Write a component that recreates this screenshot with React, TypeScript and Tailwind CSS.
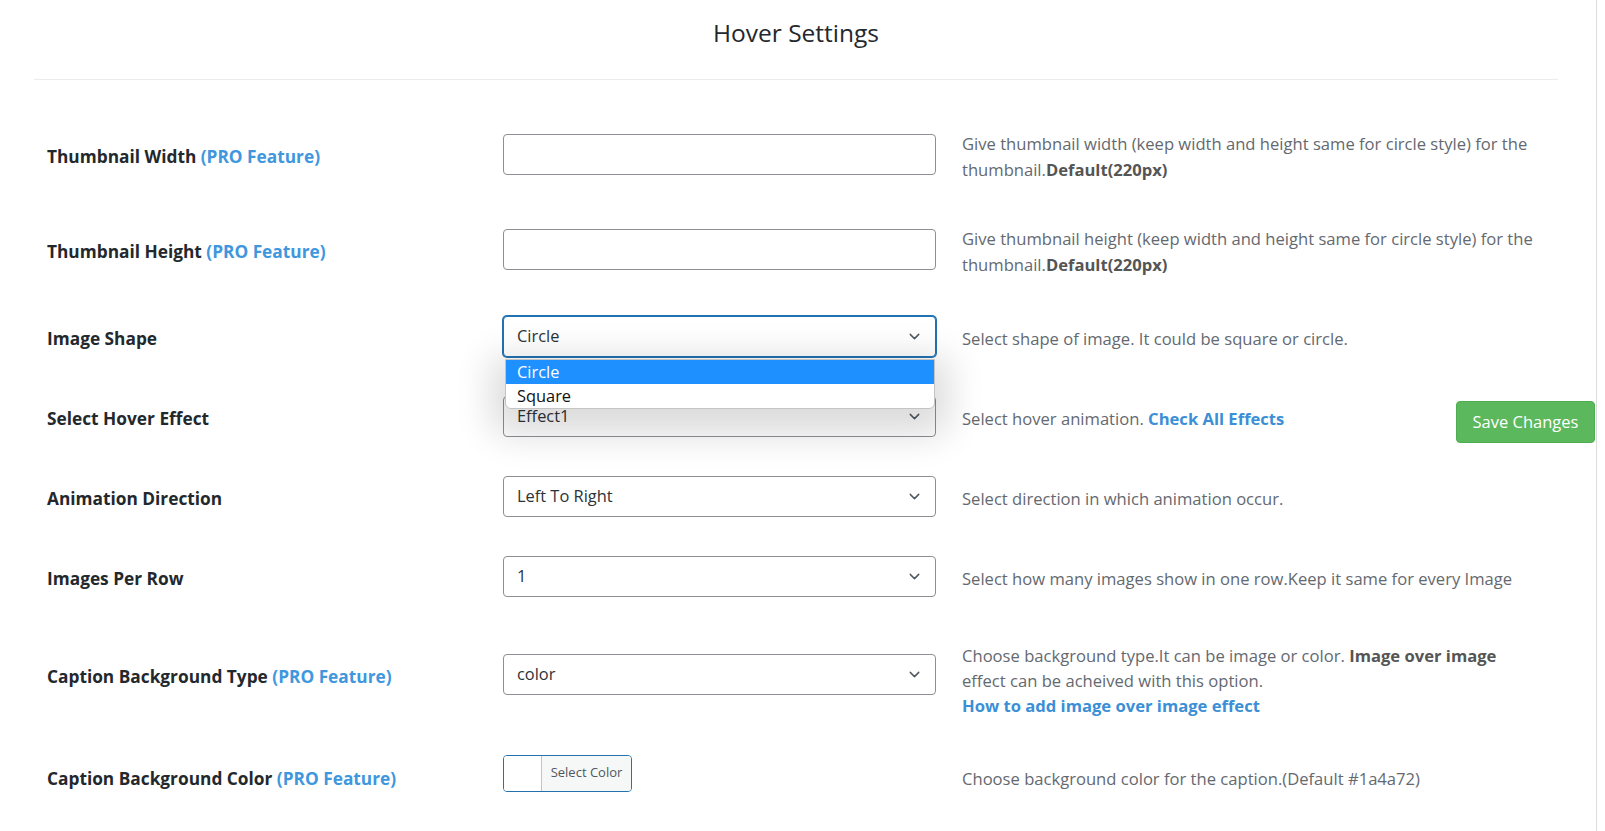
import { ChevronDown } from 'lucide-react';

const font = { fontFamily: '"Open Sans", "Noto Sans", sans-serif' };

const Pro = () => <span className="text-[#3f97de]">(PRO Feature)</span>;

const Select = ({ value, focused }: { value: string; focused?: boolean }) => (
    <div
        className={`flex items-center justify-between h-[41px] w-[433px] rounded-[4px] border bg-white pl-[13px] pr-[12px] text-[16.4px] text-[#2c3338] ${
            focused ? 'border-[#2271b1] shadow-[0_0_0_1px_#2271b1]' : 'border-[#8c8f94]'
        }`}
    >
        <span>{value}</span>
        <ChevronDown className="w-[17px] h-[17px] text-[#50575e]" strokeWidth={2} />
    </div>
);

const Input = () => <div className="h-[41px] w-[433px] rounded-[4px] border border-[#8c8f94] bg-white" />;

const rows = [
    {
        h: 'h-[96px]',
        label: <>Thumbnail Width <Pro /></>,
        field: <Input />,
        desc: (
            <>
                <span className="block">Give thumbnail width (keep width and height same for circle style) for the</span>
                <span className="block">thumbnail.<b className="font-bold text-[#555]">Default(220px)</b></span>
            </>
        ),
    },
    {
        h: 'h-[94px]',
        label: <>Thumbnail Height <Pro /></>,
        field: <Input />,
        desc: (
            <>
                <span className="block">Give thumbnail height (keep width and height same for circle style) for the</span>
                <span className="block">thumbnail.<b className="font-bold text-[#555]">Default(220px)</b></span>
            </>
        ),
    },
    {
        h: 'h-[80px]',
        label: <>Image Shape</>,
        field: (
            <div className="relative">
                <Select value="Circle" focused />
                {/* open native dropdown */}
                <div className="absolute left-[2px] top-[43px] z-10 w-[430px] overflow-hidden rounded-b-[6px] border border-[#c4c4c4] bg-white text-[16.4px] text-[#111] shadow-[0_12px_36px_14px_rgba(0,0,0,0.14)]">
                    <div className="h-[24px] bg-[#1e90ff] pl-[11px] leading-[24px] text-white">Circle</div>
                    <div className="h-[24px] pl-[11px] leading-[24px]">Square</div>
                </div>
            </div>
        ),
        desc: <>Select shape of image. It could be square or circle.</>,
    },
    {
        h: 'h-[80px]',
        label: <>Select Hover Effect</>,
        field: <Select value="Effect1" />,
        desc: (
            <>
                Select hover animation. <span className="font-bold text-[#3b8fd6]">Check All Effects</span>
            </>
        ),
    },
    {
        h: 'h-[80px]',
        label: <>Animation Direction</>,
        field: <Select value="Left To Right" />,
        desc: <>Select direction in which animation occur.</>,
    },
    {
        h: 'h-[80px]',
        label: <>Images Per Row</>,
        field: <Select value="1" />,
        desc: <>Select how many images show in one row.Keep it same for every Image</>,
    },
    {
        h: 'h-[116px]',
        label: <>Caption Background Type <Pro /></>,
        field: <Select value="color" />,
        desc: (
            <div className="relative top-[3px] leading-[25px]">
                <span className="block">
                    Choose background type.It can be image or color. <b className="font-bold text-[#555]">Image over image</b>
                </span>
                <span className="block">effect can be acheived with this option.</span>
                <span className="block font-bold text-[#3b8fd6]">How to add image over image effect</span>
            </div>
        ),
    },
    {
        h: 'h-[86px]',
        label: <span className="relative top-[1px]">Caption Background Color <Pro /></span>,
        field: (
            <div className="relative -top-[2px] flex h-[37px] w-[129px] overflow-hidden rounded-[4px] border border-[#2271b1] bg-white">
                <div className="w-[38px] shrink-0 border-r border-[#c3c4c7] bg-white" />
                <div className="flex flex-1 items-center justify-center bg-[#f6f7f7] text-[13px] text-[#50575e]">Select Color</div>
            </div>
        ),
        desc: <span className="relative top-[1px]">Choose background color for the caption.(Default #1a4a72)</span>,
    },
];

export default function App() {
    return (
        <div className="min-h-screen bg-white" style={font}>
            <div className="relative w-[1597px] min-h-[831px] border-r border-[#dcdcde]">
                <div className="ml-[34px] w-[1524px]">
                    <h2 className="pt-[17px] text-center text-[24.5px] font-medium leading-[32px] text-[#23282d]">Hover Settings</h2>
                    <div className="mt-[30px] h-px bg-[#ececec]" />

                    <div className="pl-[13px] pt-[26px]">
                        {rows.map((r, i) => (
                            <div key={i} className={`grid grid-cols-[456px_459px_1fr] items-center ${r.h}`}>
                                <div className="relative top-[3px] text-[17.3px] font-bold text-[#23282d]">{r.label}</div>
                                <div>{r.field}</div>
                                <div className="relative top-[3px] text-[16.6px] leading-[26px] text-[#646970]">{r.desc}</div>
                            </div>
                        ))}
                    </div>
                </div>

                <button className="absolute left-[1456px] top-[401px] h-[42px] w-[139px] rounded-[4px] border border-[#4cae4c] bg-[#5cb85c] text-[16.5px] text-white">
                    Save Changes
                </button>
            </div>
        </div>
    );
}
